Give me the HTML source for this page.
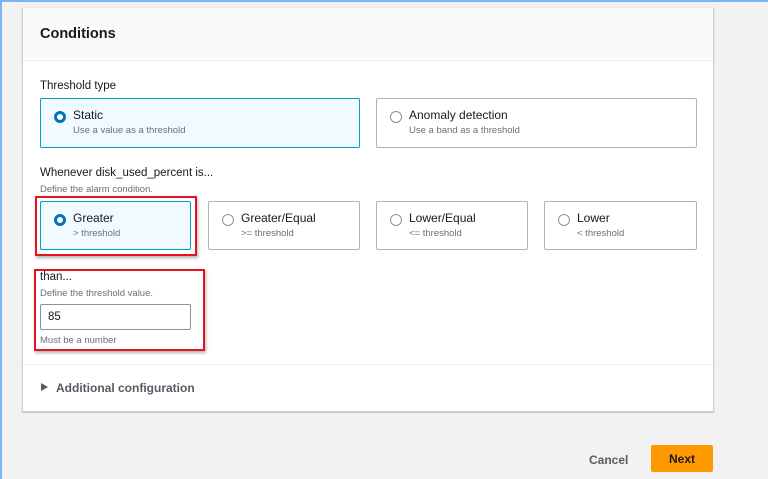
<!DOCTYPE html>
<html><head><meta charset="utf-8"><style>
*{box-sizing:border-box;margin:0;padding:0}
body{width:768px;height:479px;background:#f2f2f2;font-family:"Liberation Sans",sans-serif;position:relative;overflow:hidden;color:#16191f}
.a{position:absolute}
.card{left:23px;top:8px;width:690px;height:403px;background:#fff;box-shadow:0 1px 1px 1px rgba(0,28,36,.18)}
.hdr{left:23px;top:8px;width:690px;height:53px;background:#fafafa;border-bottom:1px solid #eaeded}
.box{position:absolute;border:1px solid #aab7b8;background:#fff;border-radius:2px}
.sel{background:#f1faff;border-color:#00a1c9}
.rad{position:absolute;left:13px;top:12px;width:12px;height:12px;border-radius:50%;border:1px solid #879596;background:#fff}
.sel .rad{border:3.5px solid #0073bb}
.t{position:absolute;left:32px;top:9px;font-size:12px;color:#16191f}
.s{position:absolute;left:32px;top:26px;font-size:9.5px;color:#687078}
.lbl{font-size:11.5px;color:#16191f}
.desc{font-size:9.5px;color:#687078}
.red{position:absolute;border:2px solid #e3141e;box-shadow:1px 2px 3px rgba(0,0,0,.3)}
</style></head><body>
<div class="a" style="left:0;top:0;width:768px;height:2px;background:#79b6f7"></div>
<div class="a" style="left:0;top:0;width:2px;height:479px;background:#79b6f7"></div>
<div class="a card"></div>
<div class="a hdr"></div>
<div class="a" style="left:40px;top:26px;font-size:14.5px;font-weight:bold;color:#16191f">Conditions</div>
<div class="a lbl" style="left:40px;top:80px">Threshold type</div>
<div class="box sel" style="left:40px;top:98px;width:320px;height:50px"><div class="rad"></div><div class="t">Static</div><div class="s">Use a value as a threshold</div></div>
<div class="box" style="left:376px;top:98px;width:321px;height:50px"><div class="rad"></div><div class="t">Anomaly detection</div><div class="s">Use a band as a threshold</div></div>
<div class="a lbl" style="left:40px;top:167px">Whenever disk_used_percent is...</div>
<div class="a desc" style="left:40px;top:184px">Define the alarm condition.</div>
<div class="box sel" style="left:40px;top:201px;width:151px;height:49px"><div class="rad"></div><div class="t">Greater</div><div class="s">&gt; threshold</div></div>
<div class="box" style="left:208px;top:201px;width:152px;height:49px"><div class="rad"></div><div class="t">Greater/Equal</div><div class="s">&gt;= threshold</div></div>
<div class="box" style="left:376px;top:201px;width:152px;height:49px"><div class="rad"></div><div class="t">Lower/Equal</div><div class="s">&lt;= threshold</div></div>
<div class="box" style="left:544px;top:201px;width:153px;height:49px"><div class="rad"></div><div class="t">Lower</div><div class="s">&lt; threshold</div></div>
<div class="red" style="left:35px;top:196px;width:162px;height:60px"></div>
<div class="red" style="left:34px;top:269px;width:171px;height:82px"></div>
<div class="a lbl" style="left:40px;top:271px;background:transparent">than...</div>
<div class="a desc" style="left:40px;top:288px">Define the threshold value.</div>
<div class="box" style="left:40px;top:304px;width:151px;height:26px;border-color:#879596"><span style="position:absolute;left:7px;top:6px;font-size:11.5px">85</span></div>
<div class="a desc" style="left:40px;top:335px">Must be a number</div>
<div class="a" style="left:23px;top:364px;width:690px;height:1px;background:#eaeded"></div>
<div class="a" style="left:41px;top:383px;width:0;height:0;border-left:7px solid #545b64;border-top:4.5px solid transparent;border-bottom:4.5px solid transparent"></div>
<div class="a" style="left:56px;top:381px;font-size:12px;font-weight:bold;color:#545b64">Additional configuration</div>
<div class="a" style="left:589px;top:453px;font-size:12px;font-weight:bold;color:#545b64">Cancel</div>
<div class="a" style="left:651px;top:445px;width:62px;height:27px;background:#ff9900;border-radius:2px;font-size:12px;font-weight:bold;color:#16191f;text-align:center;line-height:28px">Next</div>
</body></html>
